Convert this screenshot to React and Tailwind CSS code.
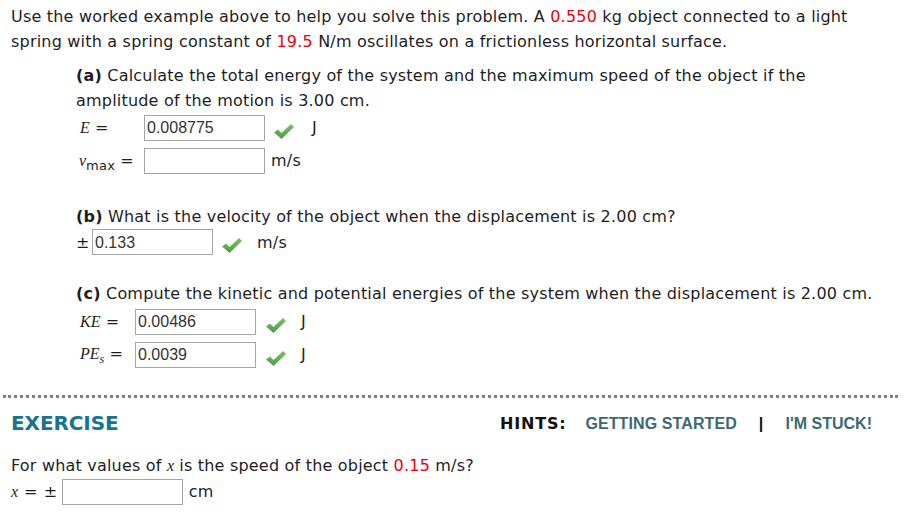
import React from "react";

function Check() {
  return (
    <svg width="26" height="20" viewBox="0 0 26 20" className="shrink-0">
      <defs>
        <linearGradient id="g" x1="0" y1="0" x2="0" y2="1">
          <stop offset="0" stopColor="#7cc26a" />
          <stop offset="1" stopColor="#4e9a45" />
        </linearGradient>
      </defs>
      <path d="M3 11.5 L7 8.5 L10.5 12 L20 3 L23 6 L10.5 18 Z" fill="url(#g)" />
    </svg>
  );
}

function Box({ value, w = "w-[121px]" }) {
  return (
    <div
      className={`${w} h-[26px] border border-[#a6a6a6] bg-white flex items-center pl-[2px] font-['Liberation_Sans',Arial,sans-serif] text-[16px] tracking-normal text-[#333]`}
    >
      {value}
    </div>
  );
}

const M = "font-['Liberation_Serif','Times_New_Roman',serif] italic tracking-normal";

export default function App() {
  return (
    <div className="font-['DejaVu_Sans',Verdana,sans-serif] text-[16px] leading-[25px] tracking-[0.2px] text-[#1e1e1e] bg-white min-h-[515px] w-[923px] pt-[4px]">
      <p className="pl-[11px] pr-[40px]">
        Use the worked example above to help you solve this problem. A{" "}
        <span className="text-[#e8000f]">0.550</span> kg object connected to a light spring with a spring
        constant of <span className="text-[#e8000f]">19.5</span> N/m oscillates on a frictionless horizontal
        surface.
      </p>

      <div className="ml-[76px] mt-[9px] pr-[15px]">
        <p className="max-w-[745px]">
          <b>(a)</b> Calculate the total energy of the system and the maximum speed of the object if the
          amplitude of the motion is 3.00 cm.
        </p>
        <div className="flex items-center mt-[1px] h-[27px]">
          <div className="w-[68px] pl-[4px]">
            <span className={M}>E</span> =
          </div>
          <Box value="0.008775" />
          <div className="ml-[6px] mt-[6px]">
            <Check />
          </div>
          <span className="ml-[15px]">J</span>
        </div>
        <div className="flex items-center mt-[6px] h-[27px]">
          <div className="w-[68px] pl-[3px]">
            <span className={M}>v</span>
            <span className="text-[13px] relative top-[4px]">max</span> =
          </div>
          <Box value="" />
          <span className="ml-[6px]">m/s</span>
        </div>

        <p className="mt-[30px]">
          <b>(b)</b> What is the velocity of the object when the displacement is 2.00 cm?
        </p>
        <div className="flex items-center h-[26px]">
          <span className="w-[16px]">±</span>
          <Box value="0.133" />
          <div className="ml-[6px] mt-[6px]">
            <Check />
          </div>
          <span className="ml-[12px]">m/s</span>
        </div>

        <p className="mt-[26px] whitespace-nowrap">
          <b>(c)</b> Compute the kinetic and potential energies of the system when the displacement is 2.00 cm.
        </p>
        <div className="flex items-center mt-[2px] h-[27px]">
          <div className="w-[59px] pl-[4px]">
            <span className={M}>KE</span> =
          </div>
          <Box value="0.00486" />
          <div className="ml-[7px] mt-[6px]">
            <Check />
          </div>
          <span className="ml-[12px]">J</span>
        </div>
        <div className="flex items-center mt-[6px] h-[27px]">
          <div className="w-[59px] pl-[4px]">
            <span className={M}>
              PE<span className="text-[12px] relative top-[4px]">s</span>
            </span>{" "}
            =
          </div>
          <Box value="0.0039" />
          <div className="ml-[7px] mt-[6px]">
            <Check />
          </div>
          <span className="ml-[12px]">J</span>
        </div>
      </div>

      <div className="ml-[3px] w-[895px] mt-[27px] border-t-[3px] border-dotted border-[#808080]" />

      <div className="flex items-center mt-[12px] h-[26px] pl-[11px] w-[900px]">
        <span className="font-bold text-[20px] tracking-[-0.1px] text-[#167493]">EXERCISE</span>
        <div className="ml-auto mr-[28px] flex items-center font-bold">
          <span className="text-[16px] tracking-[0.8px] text-[#111]">HINTS:</span>
          <span className="ml-[19px] font-['Liberation_Sans',Arial,sans-serif] text-[16px] tracking-[0.1px] text-[#3b6b70]">
            GETTING STARTED
          </span>
          <span className="ml-[22px] font-['Liberation_Sans',Arial,sans-serif] text-[16px] text-[#111]">|</span>
          <span className="ml-[22px] font-['Liberation_Sans',Arial,sans-serif] text-[16px] tracking-normal text-[#3b6b70]">
            I'M STUCK!
          </span>
        </div>
      </div>

      <p className="pl-[11px] mt-[17px]">
        For what values of <span className={M}>x</span> is the speed of the object{" "}
        <span className="text-[#e8000f]">0.15</span> m/s?
      </p>
      <div className="flex items-center pl-[11px] h-[27px]">
        <span className={M}>x</span>
        <span className="ml-[6px]">=</span>
        <span className="ml-[6px] w-[18px]">±</span>
        <Box value="" />
        <span className="ml-[6px]">cm</span>
      </div>
    </div>
  );
}
